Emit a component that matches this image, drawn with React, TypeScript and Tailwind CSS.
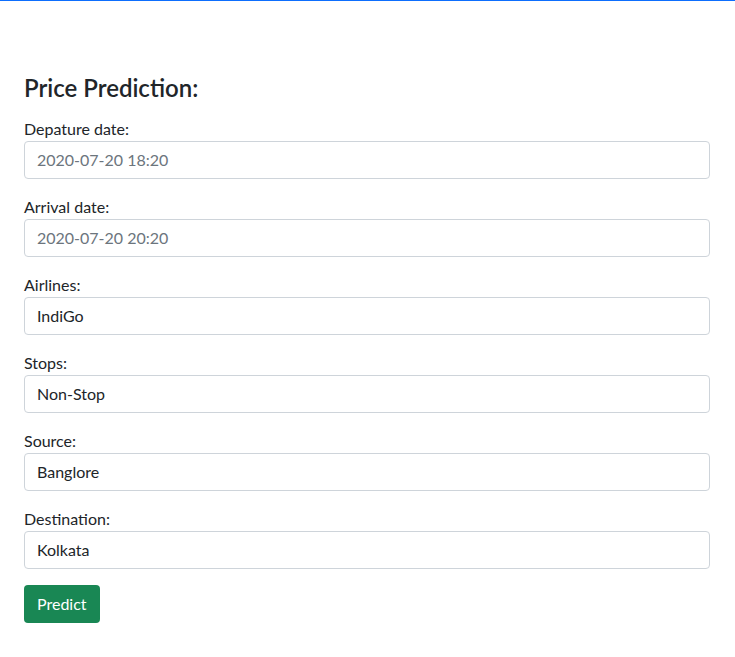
import { useState } from "react";

const fields = [
    { label: "Depature date:", value: "2020-07-20 18:20", placeholder: true },
    { label: "Arrival date:", value: "2020-07-20 20:20", placeholder: true },
    { label: "Airlines:", value: "IndiGo" },
    { label: "Stops:", value: "Non-Stop" },
    { label: "Source:", value: "Banglore" },
    { label: "Destination:", value: "Kolkata" },
];

export default function App() {
    const [values] = useState(fields);

    return (
        <div className="min-h-[657px] bg-white border-t border-[#0d6efd] text-[#212529] font-['Lato',sans-serif]">
            <div className="pl-6 pr-[25px] pt-[72px]">
                <h3 className="text-[24px] leading-[30px] font-semibold mb-[14px]">Price Prediction:</h3>

                <form onSubmit={(e) => e.preventDefault()}>
                    {values.map((f) => (
                        <div key={f.label} className="mb-4">
                            <label className="block text-base leading-6">{f.label}</label>
                            <div
                                className={`h-[38px] w-full border border-[#ced4da] rounded px-3 flex items-center text-base ${
                                    f.placeholder ? "text-[#6c757d]" : "text-[#212529]"
                                }`}
                            >
                                {f.value}
                            </div>
                        </div>
                    ))}

                    <button className="h-[38px] px-[13px] rounded bg-[#198754] text-white text-base">
                        Predict
                    </button>
                </form>
            </div>
        </div>
    );
}
